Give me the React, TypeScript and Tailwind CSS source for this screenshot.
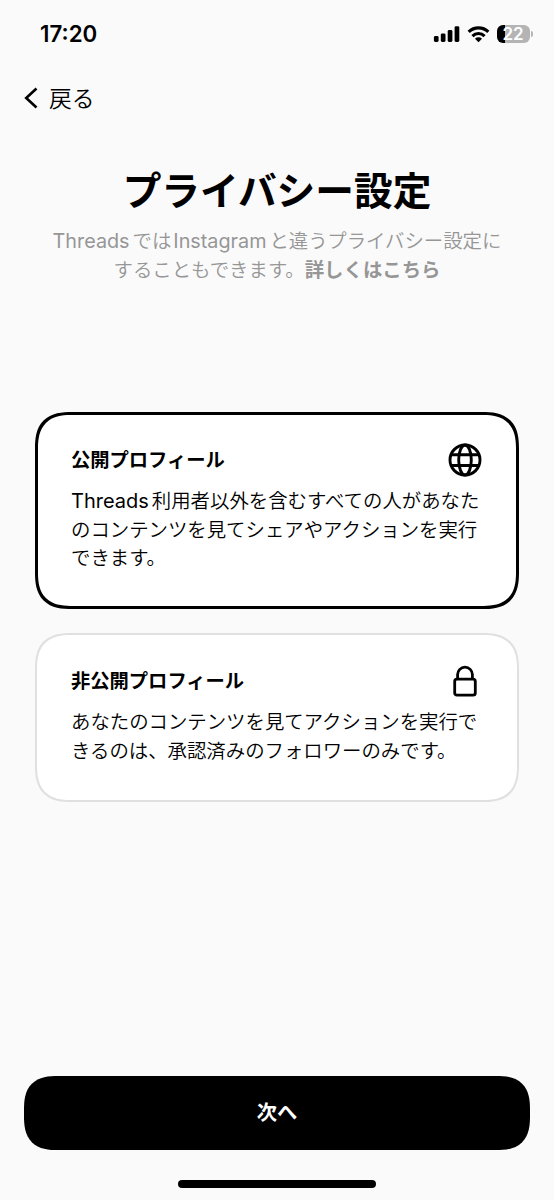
import type { ReactNode } from "react";

function SignalIcon() {
  return (
    <svg width="27" height="18" viewBox="0 0 27 18" fill="black">
      <rect x="0.9" y="11" width="4.7" height="6" rx="1.4" />
      <rect x="7.8" y="8.4" width="4.7" height="8.6" rx="1.4" />
      <rect x="14.7" y="5" width="4.7" height="12" rx="1.4" />
      <rect x="21.6" y="1.2" width="4.7" height="15.8" rx="1.4" />
    </svg>
  );
}

function WifiIcon() {
  return (
    <svg width="23" height="17" viewBox="0 0 24 18" fill="none" stroke="black" strokeWidth="3.3">
      <path d="M1.6 6.2a15 15 0 0 1 20.8 0" />
      <path d="M5.6 10.6a9.2 9.2 0 0 1 12.8 0" />
      <path d="M12 17.2l-3.7-3.7a5.2 5.2 0 0 1 7.4 0z" fill="black" stroke="none" />
    </svg>
  );
}

function Battery() {
  return (
    <div className="flex items-center gap-[1.5px]">
      <div className="flex h-[18px] w-[33px] items-center justify-center overflow-hidden rounded-[6px] bg-[linear-gradient(to_right,#000_8px,#b4b4b4_8px)] text-[17px] leading-[18px] font-semibold text-white">
        22
      </div>
      <div className="h-[6px] w-[2px] rounded-r-full bg-[#b4b4b4]" />
    </div>
  );
}

function GlobeIcon() {
  return (
    <svg width="34" height="34" viewBox="0 0 34 34" fill="none" stroke="black" strokeWidth="2.9">
      <circle cx="17" cy="17" r="15" />
      <ellipse cx="17" cy="17" rx="6.3" ry="15" />
      <path d="M3 11.7h28M3 22.5h28" />
    </svg>
  );
}

function LockIcon() {
  return (
    <svg width="24" height="32" viewBox="0 0 24 32" fill="none" stroke="black" strokeWidth="2.8">
      <rect x="1.7" y="14.2" width="20.6" height="16" rx="2.2" />
      <path d="M4.6 14.2V9.6a7.4 7.4 0 0 1 14.8 0v4.6" />
    </svg>
  );
}

function ProfileCard({ title, icon, selected, children }: { title: string; icon: ReactNode; selected?: boolean; children: ReactNode }) {
  return (
    <section
      className={
        selected
          ? "h-[197px] rounded-[37px] border-[3px] border-black bg-white pt-[28px] pr-[34px] pl-[33px] [corner-shape:superellipse(1.4)]"
          : "h-[169px] rounded-[37px] border-2 border-[#e0e0e0] bg-white pt-[29px] pr-[35px] pl-[34px] [corner-shape:superellipse(1.4)]"
      }
    >
      <div className="flex h-[34px] items-center justify-between">
        <h2 className="text-[19.3px] leading-[28px] font-bold">{title}</h2>
        <div className="flex w-[34px] justify-center">{icon}</div>
      </div>
      <p className="mt-[10px] text-[19.4px] leading-[28.5px] font-[350] whitespace-nowrap">{children}</p>
    </section>
  );
}

export default function App() {
  return (
    <main lang="ja" className="flex h-[1200px] w-[554px] flex-col bg-[#fafafa] font-['Inter','Noto_Sans_CJK_JP',sans-serif] text-black">
      <header className="flex h-[68px] items-center justify-between pr-[21px] pl-[40px]">
        <time className="text-[22.3px] leading-[26px] font-semibold">17:20</time>
        <div className="flex items-center gap-[7px]">
          <SignalIcon />
          <WifiIcon />
          <Battery />
        </div>
      </header>

      <button className="mt-[14px] ml-[24px] flex h-[32px] items-center gap-[10px] self-start text-[22.8px] leading-[32px] font-[350]">
        <svg width="15" height="22" viewBox="0 0 15 22" fill="none" stroke="black" strokeWidth="2.6">
          <path d="M12.5 1.5L2.2 11l10.3 9.5" />
        </svg>
        <span className="mt-[1px]">戻る</span>
      </button>

      <h1 className="mt-[51px] text-center text-[38.7px] leading-[52px] font-bold">プライバシー設定</h1>
      <p className="mt-[10px] text-center text-[19.4px] leading-[28.5px] font-[350] whitespace-nowrap text-[#969696]">
        <span className="mr-[3px] text-[19.8px] font-normal">Threads</span>では
        <span className="mr-[3px] ml-[2px] text-[19.8px] font-normal">Instagram</span>と違うプライバシー設定に
        <br />
        することもできます。<b className="font-bold">詳しくはこちら</b>
      </p>

      <div className="mt-[128px] flex flex-col gap-[24px] pr-[35px] pl-[35px]">
        <ProfileCard title="公開プロフィール" icon={<GlobeIcon />} selected>
          <span className="mr-[3px] text-[20px] font-normal">Threads</span>利用者以外を含むすべての人があなた
          <br />
          のコンテンツを見てシェアやアクションを実行
          <br />
          できます。
        </ProfileCard>
        <ProfileCard title="非公開プロフィール" icon={<LockIcon />}>
          あなたのコンテンツを見てアクションを実行で
          <br />
          きるのは、承認済みのフォロワーのみです。
        </ProfileCard>
      </div>

      <footer className="mt-auto flex flex-col items-center px-[24px] pb-[12px]">
        <button className="h-[74px] w-full rounded-[34px] bg-black text-[20.3px] font-bold text-white [corner-shape:superellipse(1.4)]">次へ</button>
        <div className="mt-[30px] h-[8px] w-[198px] rounded-full bg-black" />
      </footer>
    </main>
  );
}
